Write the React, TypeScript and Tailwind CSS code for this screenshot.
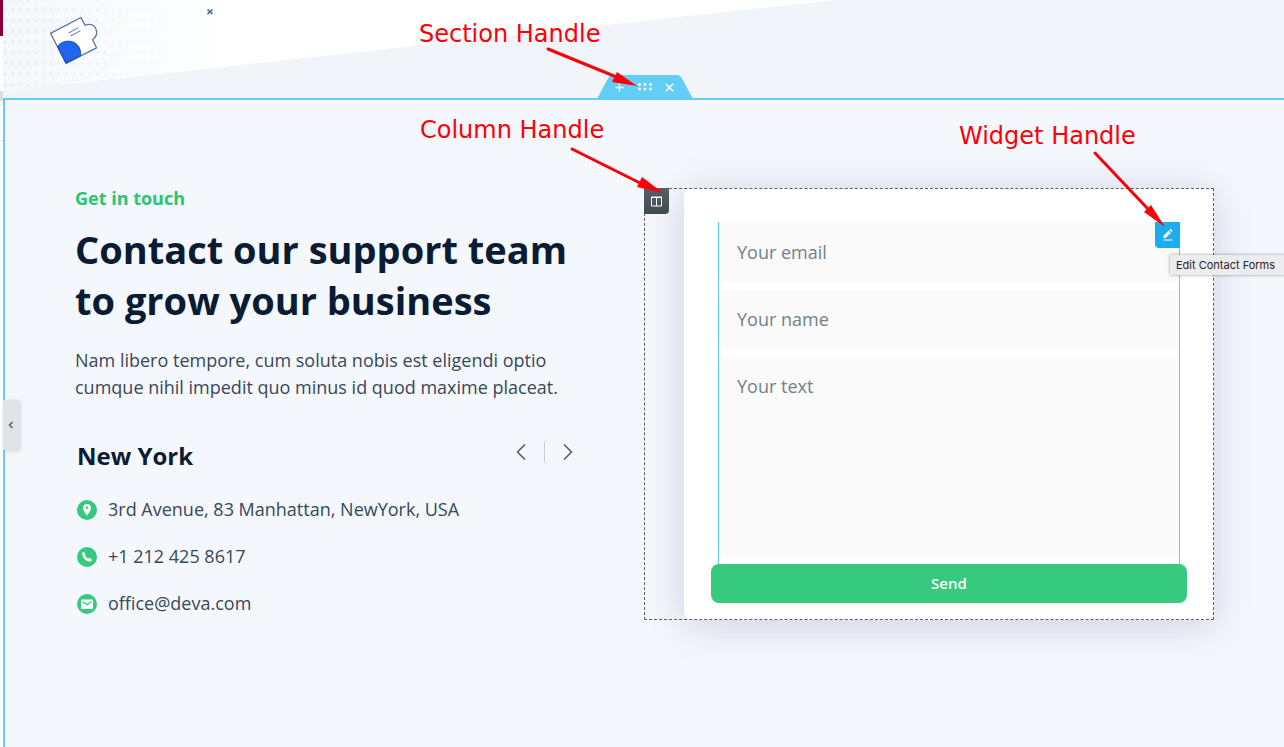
import type { ReactNode } from "react";

type Contact = {
  label: string;
  href?: string;
  icon: ReactNode;
};

const contacts: Contact[] = [
  {
    label: "3rd Avenue, 83 Manhattan, NewYork, USA",
    icon: (
      <path
        fillRule="evenodd"
        d="M10 4a3.9 3.9 0 0 0-3.9 3.9C6.100 10.800 10 15.800 10 15.800s3.900-5 3.900-7.900A3.900 3.900 0 0 0 10 4Zm0 2.500a1.300 1.300 0 1 1 0 2.600 1.300 1.300 0 0 1 0-2.600Z"
      />
    ),
  },
  {
    label: "+1 212 425 8617",
    href: "tel:+12124258617",
    icon: (
      <path d="M5.300 5.700c.7-.9 1.700-.9 2.200 0l.9 1.500c.3.6-.4 1.100-.2 1.600.4 1.100 1.500 2.100 2.600 2.600.5.200.9-.6 1.500-.3l1.900 1c.9.5.900 1.400.1 2-2.400 2-9.900-2.800-9-8.400Z" />
    ),
  },
  {
    label: "office@deva.com",
    href: "mailto:office@deva.com",
    icon: (
      <>
        <rect x="4" y="5.500" width="12" height="9.500" rx="1" />
        <path
          d="m5.500 7.500 4.500 3.300 4.500-3.300"
          fill="none"
          stroke="#37c97d"
          strokeWidth="1.100"
        />
      </>
    ),
  },
];

export default function App() {
  return (
    <div className="relative flex min-h-screen overflow-hidden bg-[#f4f7fc] font-['Open_Sans',sans-serif]">
      <PanelEdge />
      <main className="flex min-w-0 flex-1 flex-col">
        <Banner />
        <section className="relative flex-1 border-t-2 border-l-2 border-[#62cdf5] px-[70px] pt-[88px] pb-20">
          <SectionHandle />
          <div className="grid grid-cols-[minmax(0,1fr)_570px]">
            <ContactInfo />
            <FormColumn />
          </div>
        </section>
      </main>
      <Annotations />
    </div>
  );
}

// Visible edge of the editor panel with its collapse button
function PanelEdge() {
  return (
    <aside className="relative z-10 flex w-[3px] shrink-0 flex-col bg-white">
      <div className="h-9 bg-[#87003a]" />
      <div className="h-[55px]" />
      <div className="h-[10px] bg-[#d9dde0]" />
      <div className="h-10 border-b border-[#d9dde0]" />
      <button
        aria-label="Collapse panel"
        className="absolute top-[400px] left-[3px] flex h-[50px] w-4 items-center justify-center bg-[#e0e4e6] pr-px shadow-[1px_1px_4px_rgba(0,0,0,0.15)]"
      >
        <svg width="6" height="8" fill="none" stroke="#556068" strokeWidth="1.500">
          <path d="M4.500 1 1.500 4l3 3" />
        </svg>
      </button>
    </aside>
  );
}

function Banner() {
  return (
    <header className="h-[98px] overflow-hidden bg-[#f1f5fa]">
      <svg width="832" height="98" className="max-w-none">
        <defs>
          <linearGradient id="fade" x1="0" x2="1" y1="0" y2="0">
            <stop offset="0" stopColor="#f4f8fb" />
            <stop offset="1" stopColor="#ffffff" />
          </linearGradient>
          <linearGradient id="dotFade" x1="0" x2="1" y1="0" y2="0">
            <stop offset="0" stopColor="#ffffff" />
            <stop offset="1" stopColor="#000000" />
          </linearGradient>
          <pattern
            id="dots"
            x="-2"
            y="-6"
            width="7.700"
            height="10.700"
            patternUnits="userSpaceOnUse"
          >
            <circle cx="4" cy="5.300" r="1.400" fill="#e2eaf1" />
          </pattern>
          <mask id="dotMask">
            <rect width="185" height="98" fill="url(#dotFade)" />
          </mask>
          <clipPath id="slope">
            <path d="M0 0H832L0 91Z" />
          </clipPath>
        </defs>
        <g clipPath="url(#slope)">
          <rect width="832" height="98" fill="#ffffff" />
          <rect width="230" height="98" fill="url(#fade)" />
          <rect width="185" height="98" fill="url(#dots)" mask="url(#dotMask)" />
        </g>
        {/* puzzle piece */}
        <g transform="translate(-3 0)" strokeLinejoin="round">
          <path
            d="M50.500 33.300 81 17.500l4 8c1.300-.8 2.500-1.200 4-1.200 8 0 10.500 11 3.500 15.200l4 8.300L66 63.300Z"
            fill="#fff"
            stroke="#5873a3"
            strokeWidth="1.300"
          />
          <path
            d="M57.500 46.500C62 40 72 39.500 77 44.500c3 3.300 4 7 3.700 11.200L66 63.300Z"
            fill="#1f65ef"
            stroke="#27478f"
          />
          <path d="m68.500 33 10-5.300M70.500 36l10-5.300" stroke="#5873a3" />
        </g>
        <path d="m204.500 9.500 5 4.500m0-4.500-5 4.500" stroke="#3e5b93" strokeWidth="1.500" />
      </svg>
    </header>
  );
}

function SectionHandle() {
  return (
    <div className="absolute -top-[25px] left-1/2 flex h-6 w-24 -translate-x-1/2 items-center justify-center text-white">
      <svg width="96" height="24" className="absolute inset-0" fill="#62cdf5">
        <path d="M0 24 11.500 2.500Q13 0 16 0H80Q83 0 84.500 2.500L96 24Z" />
      </svg>
      <button aria-label="Add section" className="relative flex w-[25px] justify-center">
        <svg width="9" height="9" stroke="currentColor" strokeWidth="1.300">
          <path d="M4.500 .5v8M.5 4.500h8" />
        </svg>
      </button>
      <button aria-label="Edit section" className="relative flex w-[25px] justify-center">
        <svg width="14" height="8" fill="currentColor">
          <circle cx="1.500" cy="1.500" r="1.400" />
          <circle cx="7" cy="1.500" r="1.400" />
          <circle cx="12.500" cy="1.500" r="1.400" />
          <circle cx="1.500" cy="6" r="1.400" />
          <circle cx="7" cy="6" r="1.400" />
          <circle cx="12.500" cy="6" r="1.400" />
        </svg>
      </button>
      <button aria-label="Delete section" className="relative flex w-[25px] justify-center">
        <svg width="9" height="9" stroke="currentColor" strokeWidth="1.400">
          <path d="m.8 .8 7.400 7.400m0-7.400L.8 8.200" />
        </svg>
      </button>
    </div>
  );
}

function ContactInfo() {
  return (
    <div>
      <p className="text-lg leading-5 font-bold text-[#28c573]">Get in touch</p>
      <h1 className="mt-4 text-[38px] leading-[51px] font-bold text-[#0a1b34]">
        Contact our support team
        <br />
        to grow your business
      </h1>
      <p className="mt-[21px] text-lg leading-[27px] text-[#38485b]">
        Nam libero tempore, cum soluta nobis est eligendi optio
        <br />
        cumque nihil impedit quo minus id quod maxime placeat.
      </p>

      <div className="mt-10 mr-[69px] ml-0.5 flex items-start justify-between">
        <h2 className="text-2xl leading-[30px] font-bold text-[#0a1b34]">New York</h2>
        <div className="flex items-center">
          <button aria-label="Previous office" className="px-0.5">
            <svg width="10" height="16" fill="none" stroke="#4d5c74" strokeWidth="1.500">
              <path d="M9 .5 1.500 8 9 15.500" />
            </svg>
          </button>
          <span className="mx-4 h-[22px] w-px bg-[#cbd0d7]" />
          <button aria-label="Next office" className="px-0.5">
            <svg width="10" height="16" fill="none" stroke="#4d5c74" strokeWidth="1.500">
              <path d="M1 .5 8.500 8 1 15.500" />
            </svg>
          </button>
        </div>
      </div>

      <ul className="mt-[25px] ml-0.5 flex flex-col gap-5">
        {contacts.map((contact) => (
          <li key={contact.label} className="flex items-center gap-[11px]">
            <svg width="20" height="20" fill="#fff" className="shrink-0">
              <circle cx="10" cy="10" r="10" fill="#37c97d" />
              {contact.icon}
            </svg>
            <span className="text-lg leading-[27px] text-[#38485b]">
              {contact.href ? <a href={contact.href}>{contact.label}</a> : contact.label}
            </span>
          </li>
        ))}
      </ul>
    </div>
  );
}

function FormColumn() {
  const field =
    "block w-full resize-none bg-[#fafafa] px-[18px] text-lg text-[#38485b] outline-none placeholder:text-[#757f8c]";

  return (
    <div className="relative self-start">
      <form
        className="ml-10 rounded-lg bg-white px-[34px] pt-[34px] pb-[17px] shadow-[0_5px_40px_rgba(40,40,90,0.18)]"
        onSubmit={(e) => e.preventDefault()}
      >
        <div className="relative flex flex-col gap-2 border-x border-[#62cdf5] pt-px pb-[7px]">
          <input type="email" aria-label="Your email" placeholder="Your email" className={`${field} h-[59px] pb-0.5`} />
          <input type="text" aria-label="Your name" placeholder="Your name" className={`${field} h-[59px] pb-0.5`} />
          <textarea aria-label="Your text" placeholder="Your text" className={`${field} h-[200px] pt-4 leading-[27px]`} />
          <WidgetHandle />
        </div>
        <div className="-mx-[7px]">
          <button className="h-[39px] w-full rounded-lg bg-[#37c97d] text-[15px] font-semibold text-white">
            Send
          </button>
        </div>
      </form>

      <div className="pointer-events-none absolute inset-0 border border-dashed border-[#556068]" />
      <button
        aria-label="Edit column"
        className="absolute top-0 left-0 flex h-[26px] w-[25px] items-center justify-center rounded-br-sm bg-linear-to-b from-[#556068] to-[#424b53]"
      >
        <svg width="11" height="11" fill="none" stroke="#fff">
          <path d="M.5 1.500h10v8.500H.5zM5.500 1v9" />
          <path d="M0 1h11" />
        </svg>
      </button>
    </div>
  );
}

function WidgetHandle() {
  return (
    <>
      <button
        aria-describedby="widget-tip"
        aria-label="Edit widget"
        className="absolute top-0 -right-px flex h-[26px] w-[25px] items-center justify-center rounded-bl-sm bg-[#1badee]"
      >
        <svg width="10" height="12" fill="#fff">
          <path d="M.5 9V6.800L5.700 1.600l2.200 2.200L2.700 9ZM6.400 .9 7 .3q.5-.5 1 0L9.200 1.500q.5.500 0 1L8.600 3.100ZM.5 10.500h9v1h-9z" />
        </svg>
      </button>
      <div
        id="widget-tip"
        role="tooltip"
        className="absolute top-[33px] left-[calc(100%-9px)] z-10 bg-[#ececee] py-0.5 pr-2.5 pl-1.5 font-['Inter',sans-serif] text-[11px] leading-4 whitespace-nowrap text-[#262626] shadow-[0_0_3px_rgba(0,0,0,0.4)]"
      >
        Edit Contact Forms
      </div>
    </>
  );
}

// Red callouts laid over the page
function Annotations() {
  return (
    <div className="pointer-events-none absolute inset-0 z-20 font-['DejaVu_Sans','Verdana',sans-serif] text-2xl leading-8 whitespace-nowrap text-[#fb0007]">
      <span className="absolute top-[18px] left-[419px]">Section Handle</span>
      <span className="absolute top-[114px] left-[420px]">Column Handle</span>
      <span className="absolute top-[120px] left-[959px]">Widget Handle</span>
      <svg width="1284" height="260" className="absolute top-0 left-0" fill="#fb0007" stroke="#fb0007">
        <g strokeWidth="3" strokeLinecap="round">
          <path d="m548 49 66 27" />
          <path d="m572 149 68 34" />
          <path d="m1095 153 53 56" />
        </g>
        <g stroke="none">
          <path d="M637 86 617 72 612 82Z" />
          <path d="m663 193-21-16-5 10Z" />
          <path d="m1165 227-14-22-7 7Z" />
        </g>
      </svg>
    </div>
  );
}
